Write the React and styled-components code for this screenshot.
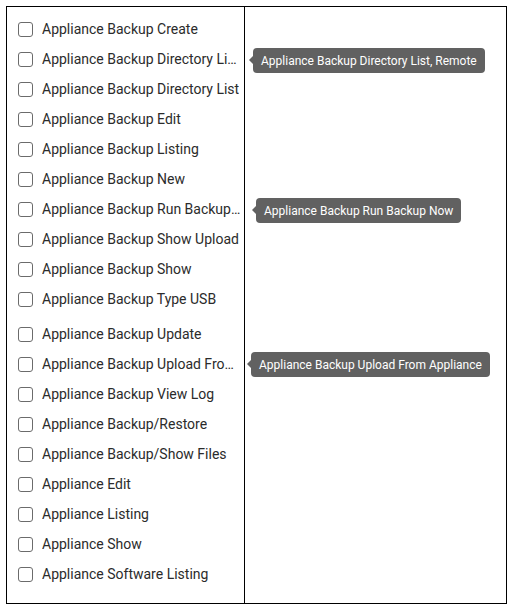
import styled, { createGlobalStyle } from 'styled-components';

const GlobalStyle = createGlobalStyle`
  body {
    margin: 0;
    background: #fff;
    font-family: Roboto, "Liberation Sans", sans-serif;
  }
`;

const items = [
  { label: 'Appliance Backup Create' },
  { label: 'Appliance Backup Directory List, Remote' },
  { label: 'Appliance Backup Directory List' },
  { label: 'Appliance Backup Edit' },
  { label: 'Appliance Backup Listing' },
  { label: 'Appliance Backup New' },
  { label: 'Appliance Backup Run Backup Now' },
  { label: 'Appliance Backup Show Upload' },
  { label: 'Appliance Backup Show' },
  { label: 'Appliance Backup Type USB' },
  { label: 'Appliance Backup Update', spaced: true },
  { label: 'Appliance Backup Upload From Appliance' },
  { label: 'Appliance Backup View Log' },
  { label: 'Appliance Backup/Restore' },
  { label: 'Appliance Backup/Show Files' },
  { label: 'Appliance Edit' },
  { label: 'Appliance Listing' },
  { label: 'Appliance Show' },
  { label: 'Appliance Software Listing' },
];

const tips = [
  { text: 'Appliance Backup Directory List, Remote', left: 8, top: 41 },
  { text: 'Appliance Backup Run Backup Now', left: 11, top: 191 },
  { text: 'Appliance Backup Upload From Appliance', left: 6, top: 345 },
];

const Frame = styled.div`
  margin: 6px 0 0 6px;
  width: 501px;
  height: 598px;
  box-sizing: border-box;
  border: 1px solid #000;
  display: flex;
`;

const List = styled.ul`
  list-style: none;
  margin: 0;
  padding: 7px 0 0 11px;
  width: 238px;
  box-sizing: border-box;
  border-right: 1px solid #000;
`;

const Row = styled.li`
  display: flex;
  align-items: center;
  height: 30px;
  margin-top: ${({ $spaced }) => ($spaced ? '5px' : '0')};
  gap: 9px;
`;

const Box = styled.span`
  flex: none;
  width: 15px;
  height: 15px;
  box-sizing: border-box;
  border: 1.5px solid #6b6b6b;
  border-radius: 3px;
  background: #fff;
`;

const Label = styled.span`
  font-size: 14px;
  color: #2b2b2b;
  white-space: nowrap;
  overflow: hidden;
  text-overflow: ellipsis;
  max-width: 200px;
`;

const Side = styled.div`
  position: relative;
  flex: 1;
`;

const Tip = styled.div`
  position: absolute;
  height: 25px;
  display: flex;
  align-items: center;
  padding: 0 8px;
  border-radius: 4px;
  background: #616161;
  color: #fff;
  font-size: 12px;
  white-space: nowrap;

  &::before {
    content: '';
    position: absolute;
    left: -4px;
    top: 8px;
    border-style: solid;
    border-width: 4.5px 4px 4.5px 0;
    border-color: transparent #616161 transparent transparent;
  }
`;

const App = () => (
  <>
    <GlobalStyle />
    <Frame>
      <List>
        {items.map((item) => (
          <Row key={item.label} $spaced={item.spaced}>
            <Box />
            <Label>{item.label}</Label>
          </Row>
        ))}
      </List>
      <Side>
        {tips.map((tip) => (
          <Tip key={tip.text} style={{ left: tip.left, top: tip.top }}>
            {tip.text}
          </Tip>
        ))}
      </Side>
    </Frame>
  </>
);

export default App;
